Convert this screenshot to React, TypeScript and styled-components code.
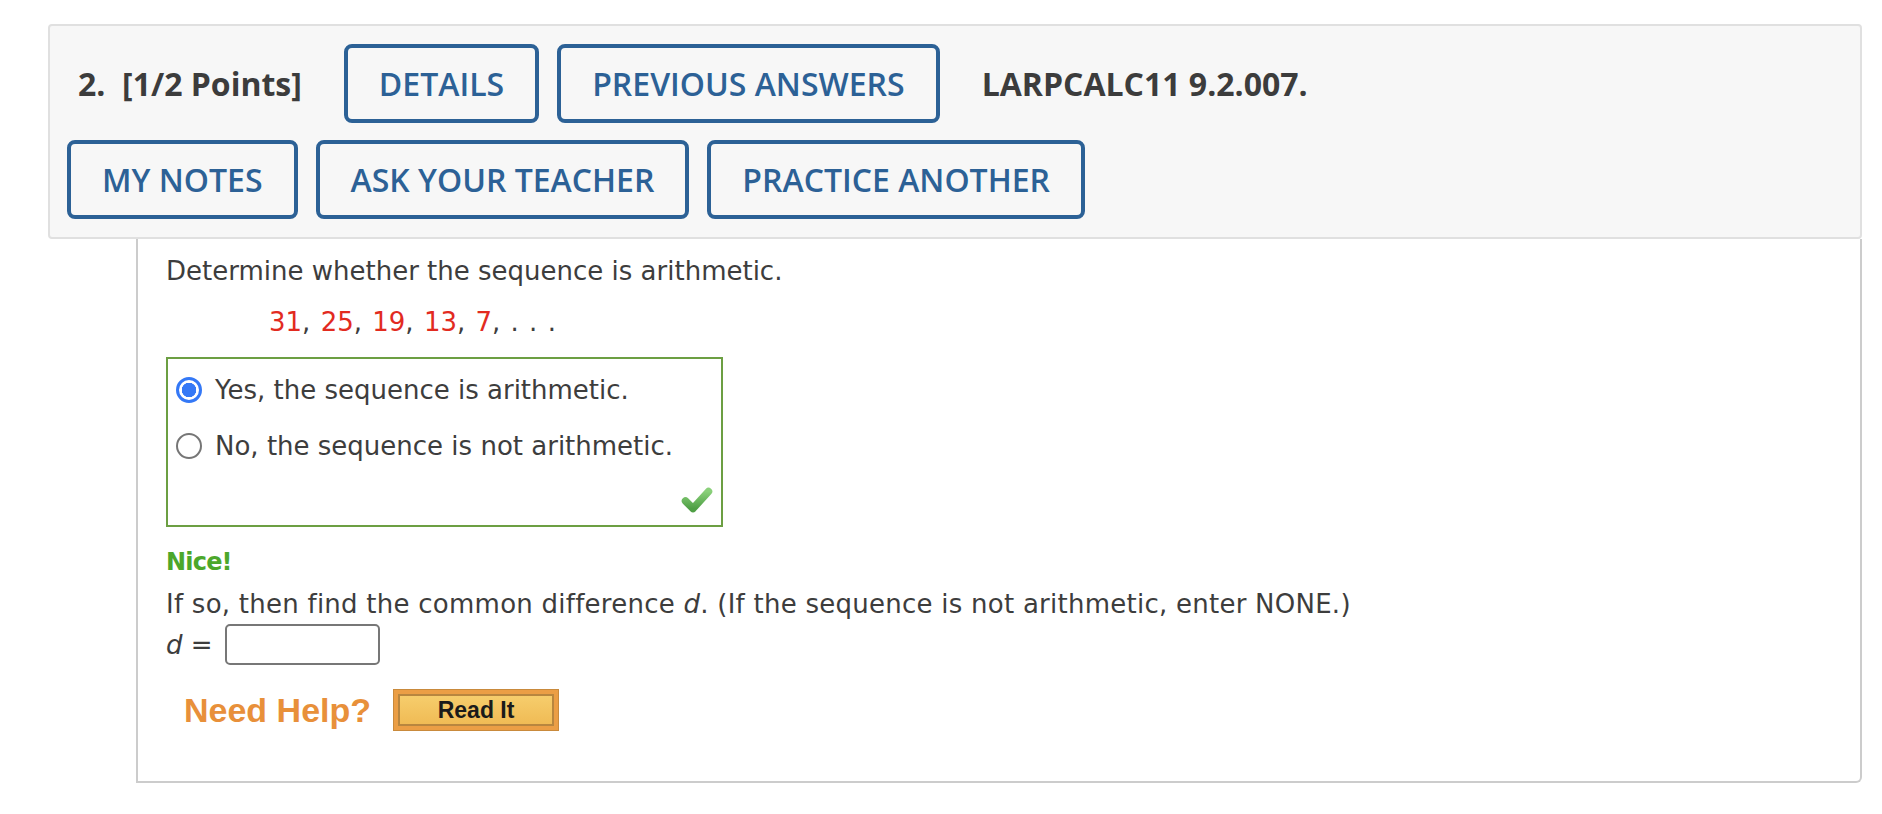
import React from 'react'
import styled, { createGlobalStyle } from 'styled-components'

const GlobalStyle = createGlobalStyle`
    html, body {
        margin: 0;
        padding: 0;
        background: #ffffff;
    }
    body {
        font-family: "DejaVu Sans", Verdana, sans-serif;
        color: #3d3d3d;
    }
`

const Page = styled.div`
    padding: 24px 0 0 48px;
    width: 1814px;
`

const Header = styled.div`
    box-sizing: border-box;
    width: 1814px;
    background: #f7f7f7;
    border: 2px solid #e0e0e0;
    border-radius: 4px;
    padding: 18px 17px;
    display: flex;
    flex-direction: column;
    gap: 17px;
    font-family: "Open Sans", sans-serif;
`

const HeaderRow = styled.div`
    display: flex;
    align-items: center;
    gap: 18px;
    height: 79px;
`

const Label = styled.span<{ $lead?: boolean }>`
    font-size: 32px;
    font-weight: 700;
    color: #3c3c3c;
    white-space: pre;
    margin: ${(p) => (p.$lead ? '0 24px 0 11px' : '0 0 0 24px')};
`

const ActionButton = styled.button`
    box-sizing: border-box;
    height: 79px;
    padding: 0 31px;
    background: #f7f7f7;
    border: 4px solid #2c6196;
    border-radius: 8px;
    color: #2c6196;
    font-family: "Open Sans", sans-serif;
    font-size: 32px;
    font-weight: 600;
    cursor: pointer;
`

const Content = styled.div`
    box-sizing: border-box;
    margin-left: 88px;
    width: 1726px;
    height: 544px;
    border: 2px solid #cccccc;
    border-top: none;
    border-radius: 0 0 6px 0;
    padding: 17px 28px 0;
    font-size: 26px;
    line-height: 30px;
`

const Para = styled.p<{ $gap?: number; $spread?: boolean }>`
    margin: ${(p) => p.$gap ?? 0}px 0 0;
    letter-spacing: ${(p) => (p.$spread ? '0.25px' : 'normal')};
`

const Sequence = styled.p`
    margin: 21px 0 0 103px;
    color: #e22b1f;
    word-spacing: 2px;
`

const Comma = styled.span`
    color: #3d3d3d;
`

const AnswerBox = styled.div`
    box-sizing: border-box;
    margin-top: 20px;
    width: 557px;
    height: 170px;
    border: 2px solid #6c9f43;
    padding: 3px 0 0 8px;
    display: flex;
    flex-direction: column;
`

const Choice = styled.label`
    display: flex;
    align-items: center;
    height: 56px;
    gap: 13px;
`

const Radio = styled.input.attrs({ type: 'radio' })`
    appearance: none;
    box-sizing: border-box;
    flex: none;
    margin: 0;
    width: 26px;
    height: 26px;
    border-radius: 50%;
    border: 2px solid #767676;
    background: #ffffff;
    &:checked {
        border: 3px solid #3478f6;
        background: radial-gradient(circle, #3478f6 0 7px, #ffffff 7.5px);
    }
`

const BoxFooter = styled.div`
    flex: 1;
    display: flex;
    justify-content: flex-end;
    align-items: flex-end;
    padding: 0 8px 12px 0;
`

const Nice = styled.p`
    margin: 20px 0 0;
    color: #4ca72b;
    font-size: 24px;
    letter-spacing: -0.8px;
    font-weight: 700;
`

const AnswerRow = styled.div`
    display: flex;
    align-items: center;
    gap: 12px;
    margin-top: 5px;
`

const Var = styled.i`
    font-style: italic;
`

const AnswerInput = styled.input`
    box-sizing: border-box;
    width: 155px;
    height: 41px;
    border: 2px solid #777777;
    border-radius: 5px;
    background: #ffffff;
    font-size: 22px;
`

const HelpRow = styled.div`
    display: flex;
    align-items: center;
    gap: 22px;
    margin: 24px 0 0 18px;
`

const NeedHelp = styled.span`
    font-family: "Liberation Sans", Arial, sans-serif;
    font-size: 34px;
    font-weight: 700;
    color: #e8903a;
    line-height: normal;
`

const ReadIt = styled.button`
    box-sizing: border-box;
    width: 166px;
    height: 42px;
    padding: 4px;
    background: #eb9e45;
    border: 1px solid #c98a3c;
    cursor: pointer;
    display: flex;
`

const ReadItInner = styled.span`
    flex: 1;
    display: flex;
    align-items: center;
    justify-content: center;
    border: 2px solid #b8863f;
    background: linear-gradient(#f6cd6c, #f0bb55);
    font-family: "Liberation Sans", Arial, sans-serif;
    font-size: 23px;
    font-weight: 700;
    color: #1a1a1a;
`

const CheckMark = () => (
    <svg width="32" height="26" viewBox="0 0 32 26">
        <defs>
            <linearGradient id="ck" x1="0" y1="0" x2="0" y2="1">
                <stop offset="0" stopColor="#8ad07a" />
                <stop offset="1" stopColor="#4f9f45" />
            </linearGradient>
        </defs>
        <path
            d="M4.5 14 L12 21.5 L27.5 4.5"
            fill="none"
            stroke="url(#ck)"
            strokeWidth="7.5"
            strokeLinecap="round"
            strokeLinejoin="round"
        />
    </svg>
)

const numbers = ['31', '25', '19', '13', '7']

export default function App() {
    return (
        <>
            <GlobalStyle />
            <Page>
                <Header>
                    <HeaderRow>
                        <Label $lead>2.  [1/2 Points]</Label>
                        <ActionButton>DETAILS</ActionButton>
                        <ActionButton>PREVIOUS ANSWERS</ActionButton>
                        <Label>LARPCALC11 9.2.007.</Label>
                    </HeaderRow>
                    <HeaderRow>
                        <ActionButton>MY NOTES</ActionButton>
                        <ActionButton>ASK YOUR TEACHER</ActionButton>
                        <ActionButton>PRACTICE ANOTHER</ActionButton>
                    </HeaderRow>
                </Header>
                <Content>
                    <Para>Determine whether the sequence is arithmetic.</Para>
                    <Sequence>
                        {numbers.map((n) => (
                            <React.Fragment key={n}>
                                {n}
                                <Comma>, </Comma>
                            </React.Fragment>
                        ))}
                        <Comma>. . .</Comma>
                    </Sequence>
                    <AnswerBox>
                        <Choice>
                            <Radio name="arith" defaultChecked />
                            Yes, the sequence is arithmetic.
                        </Choice>
                        <Choice>
                            <Radio name="arith" />
                            No, the sequence is not arithmetic.
                        </Choice>
                        <BoxFooter>
                            <CheckMark />
                        </BoxFooter>
                    </AnswerBox>
                    <Nice>Nice!</Nice>
                    <Para $gap={12} $spread>
                        If so, then find the common difference <Var>d</Var>. (If the
                        sequence is not arithmetic, enter NONE.)
                    </Para>
                    <AnswerRow>
                        <span>
                            <Var>d</Var> =
                        </span>
                        <AnswerInput type="text" />
                    </AnswerRow>
                    <HelpRow>
                        <NeedHelp>Need Help?</NeedHelp>
                        <ReadIt>
                            <ReadItInner>Read It</ReadItInner>
                        </ReadIt>
                    </HelpRow>
                </Content>
            </Page>
        </>
    )
}
